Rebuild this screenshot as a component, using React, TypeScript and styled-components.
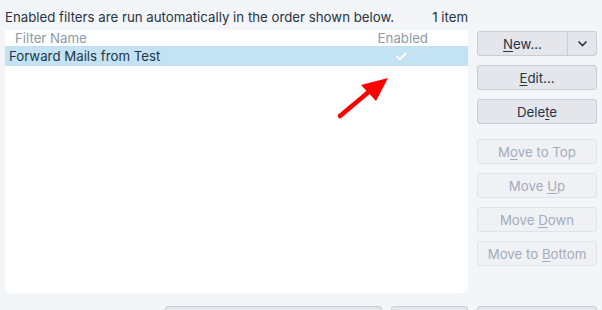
import styled, { createGlobalStyle } from "styled-components";

const GlobalStyle = createGlobalStyle`
  html, body {
    margin: 0;
    padding: 0;
    background: #f3f5f9;
  }
  body {
    font-family: Inter, "Noto Sans", sans-serif;
    font-size: 13.25px;
    color: #253345;
  }
`;

const Dialog = styled.div`
  width: 602px;
  height: 310px;
  overflow: hidden;
  display: grid;
  grid-template-columns: 463px 120px;
  grid-template-rows: auto 1fr auto;
  column-gap: 9px;
  padding: 0 5px;
  box-sizing: border-box;
`;

const InfoRow = styled.div`
  grid-column: 1;
  display: flex;
  justify-content: space-between;
  align-items: center;
  height: 30px;
  padding-top: 4px;
  box-sizing: border-box;
  white-space: nowrap;
`;

const ListBox = styled.div`
  grid-column: 1;
  grid-row: 2;
  background: #ffffff;
  border-radius: 0 0 6px 6px;
  height: 263px;
  position: relative;
`;

const HeaderRow = styled.div`
  display: flex;
  height: 16px;
  align-items: center;
  color: #8e99a8;
  padding: 0 10px;
`;

const HeaderCell = styled.div<{ $right?: boolean }>`
  flex: ${(p) => (p.$right ? "0 0 auto" : "1")};
  padding-right: ${(p) => (p.$right ? "30px" : "0")};
`;

const FilterRow = styled.div<{ $selected?: boolean }>`
  display: flex;
  align-items: center;
  height: 20px;
  box-sizing: border-box;
  padding: 0 4px;
  background: ${(p) => (p.$selected ? "#c3e3f5" : "transparent")};
  border-top: 1px dotted #d9dca8;
  border-bottom: 1px dotted #d9dca8;
`;

const FilterName = styled.div`
  flex: 1;
`;

const CheckCell = styled.div`
  width: 40px;
  margin-right: 43px;
  display: flex;
  justify-content: center;
`;

const Arrow = styled.svg`
  position: absolute;
  left: 324px;
  top: 15px;
`;

const Side = styled.div`
  grid-column: 2;
  grid-row: 2;
  display: flex;
  flex-direction: column;
  gap: 9px;
  padding-top: 1px;
`;

const Button = styled.button<{ $disabled?: boolean; $gapBefore?: boolean }>`
  height: 25px;
  box-sizing: border-box;
  margin-top: ${(p) => (p.$gapBefore ? "6px" : "0")};
  border: 1px solid ${(p) => (p.$disabled ? "#e0e3e9" : "#c9cdd5")};
  background: ${(p) => (p.$disabled ? "#eff1f5" : "#e4e6eb")};
  color: ${(p) => (p.$disabled ? "#a3acb9" : "#253345")};
  border-radius: 3px;
  font: inherit;
  padding: 0 8px;
  display: flex;
  align-items: center;
  justify-content: center;
  white-space: nowrap;
  width: 100%;
`;

const SplitButton = styled.div`
  height: 25px;
  box-sizing: border-box;
  border: 1px solid #c9cdd5;
  background: #e4e6eb;
  border-radius: 3px;
  display: flex;
`;

const SplitMain = styled.div`
  flex: 1;
  display: flex;
  align-items: center;
  justify-content: center;
  border-right: 1px solid #c9cdd5;
`;

const SplitArrow = styled.div`
  width: 28px;
  display: flex;
  align-items: center;
  justify-content: center;
`;

const U = styled.span`
  text-decoration: underline;
  text-underline-offset: 2px;
`;

const Footer = styled.div`
  grid-column: 1 / span 2;
  grid-row: 3;
  display: flex;
  justify-content: flex-end;
  gap: 9px;
  padding-top: 13px;
  height: 30px;
`;

const FooterButton = styled.div<{ $w: number }>`
  width: ${(p) => p.$w}px;
  height: 25px;
  box-sizing: border-box;
  border: 1px solid #c9cdd5;
  background: #e4e6eb;
  border-radius: 3px;
`;

export default function App() {
  return (
    <>
      <GlobalStyle />
      <Dialog>
        <InfoRow>
          <span>Enabled filters are run automatically in the order shown below.</span>
          <span>1 item</span>
        </InfoRow>
        <ListBox>
          <HeaderRow>
            <HeaderCell>Filter Name</HeaderCell>
            <HeaderCell $right>Enabled</HeaderCell>
          </HeaderRow>
          <FilterRow $selected>
            <FilterName>Forward Mails from Test</FilterName>
            <CheckCell>
              <svg width="13" height="10" viewBox="0 0 13 10">
                <path d="M1.5 5 L4.8 8.2 L11.5 1.8" fill="none" stroke="#ffffff" strokeWidth="1.8" />
              </svg>
            </CheckCell>
          </FilterRow>
          <Arrow width="62" height="76" viewBox="0 0 62 76">
            <line x1="11" y1="71" x2="42" y2="45" stroke="#ff0000" strokeWidth="4.5" strokeLinecap="round" />
            <polygon points="59,33 32,40 47,56" fill="#ff0000" />
          </Arrow>
        </ListBox>
        <Side>
          <SplitButton>
            <SplitMain>
              <span><U>N</U>ew...</span>
            </SplitMain>
            <SplitArrow>
              <svg width="11" height="7" viewBox="0 0 11 7">
                <path d="M1.5 1.5 L5.5 5.5 L9.5 1.5" fill="none" stroke="#253345" strokeWidth="1.6" />
              </svg>
            </SplitArrow>
          </SplitButton>
          <Button><span><U>E</U>dit...</span></Button>
          <Button><span>Dele<U>t</U>e</span></Button>
          <Button $disabled $gapBefore><span>M<U>o</U>ve to Top</span></Button>
          <Button $disabled><span>Move <U>U</U>p</span></Button>
          <Button $disabled><span>Move <U>D</U>own</span></Button>
          <Button $disabled><span>Move to <U>B</U>ottom</span></Button>
        </Side>
        <Footer>
          <FooterButton $w={217} />
          <FooterButton $w={77} />
          <FooterButton $w={120} />
        </Footer>
      </Dialog>
    </>
  );
}
